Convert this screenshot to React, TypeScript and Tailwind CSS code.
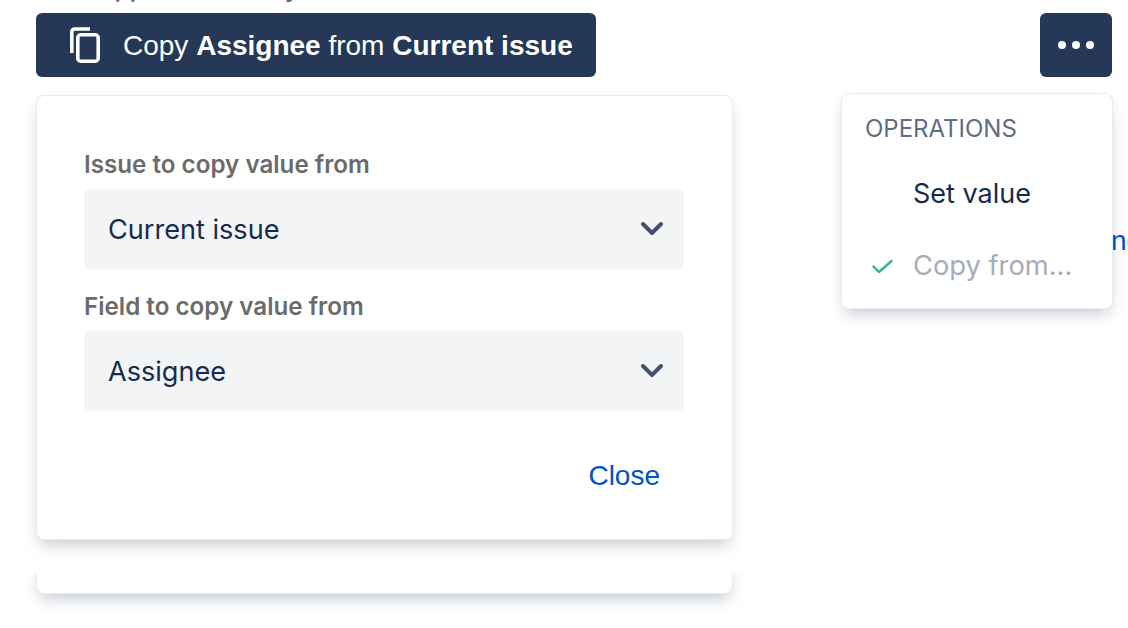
const cardShadow = "shadow-[inset_0_0_0_1px_rgba(9,30,66,0.09),0_8px_16px_-4px_rgba(9,30,66,0.25)]";

function Chevron() {
  return (
    <svg width="24" height="24" viewBox="0 0 24 24" fill="none" className="text-[#42526e]">
      <path d="M3 7 12 16 21 7" stroke="currentColor" strokeWidth="4" strokeLinecap="round" strokeLinejoin="round" />
    </svg>
  );
}

function CopyIcon() {
  return (
    <svg width="30" height="36" viewBox="0 0 30 36" fill="none" stroke="white" strokeWidth="3.6">
      <path d="M1.8 26V5a3 3 0 0 1 3-3H20" />
      <rect x="7.8" y="7.8" width="20.4" height="26.4" rx="3" />
    </svg>
  );
}

function SelectField({ label, value }: { label: string; value: string }) {
  return (
    <div>
      <p className="text-[24.2px] font-semibold leading-[28px] text-[#6b6b6b]">{label}</p>
      <div className="mt-[10px] flex h-[80px] items-center justify-between rounded-[6px] bg-[#f3f4f6] pl-[24px] pr-[20px]">
        <span className="translate-y-[1px] text-[27.1px] text-[#172b4d]">{value}</span>
        <Chevron />
      </div>
    </div>
  );
}

export default function App() {
  return (
    <div className="h-[628px] w-[1128px] overflow-hidden bg-white font-['Inter',sans-serif]">
      <div className="h-[13px] overflow-hidden pl-[84px]">
        <p className="-mt-[25px] text-[24.2px] font-semibold leading-[28px] text-[#6b6b6b]">Supported item by</p>
      </div>
      <div className="flex items-start justify-between pl-[36px] pr-[16px]">
        <div className="flex h-[64px] w-[560px] items-center gap-[23px] rounded-[6px] bg-[#253858] pl-[34px] font-['Liberation_Sans',sans-serif] text-[28px] text-white">
          <CopyIcon />
          <span className="translate-y-[1px]">
            Copy <b>Assignee</b> from <b>Current issue</b>
          </span>
        </div>
        <div className="flex h-[64px] w-[72px] items-center justify-center gap-[6px] rounded-[6px] bg-[#253858]">
          <span className="size-[8px] rounded-full bg-white" />
          <span className="size-[8px] rounded-full bg-white" />
          <span className="size-[8px] rounded-full bg-white" />
        </div>
      </div>
      <div className="mt-[16px] flex items-start">
        <div className="ml-[36px] w-[697px] shrink-0">
          <div className={`mt-[2px] h-[445px] rounded-[8px] bg-white pl-[48px] pr-[49px] pt-[56px] ${cardShadow}`}>
            <div className="flex flex-col gap-[24px]">
              <SelectField label="Issue to copy value from" value="Current issue" />
              <SelectField label="Field to copy value from" value="Assignee" />
            </div>
            <div className="mt-[49px] flex justify-end pr-[24px] font-['Liberation_Sans',sans-serif] text-[28px] leading-[32px] text-[#0052cc]">
              Close
            </div>
          </div>
        </div>
        <div className={`relative z-10 ml-[108px] h-[216px] w-[272px] shrink-0 rounded-[8px] bg-white px-[24px] ${cardShadow}`}>
          <p className="pt-[22px] text-[24px] leading-[28px] text-[#5e6c84]">OPERATIONS</p>
          <p className="mt-[33px] pl-[48px] text-[27px] leading-[36px] text-[#172b4d]">Set value</p>
          <div className="mt-[36px] flex items-center">
            <svg width="48" height="24" viewBox="0 0 48 24" fill="none" stroke="#36b37e" strokeWidth="2.4">
              <path d="M8.5 12.5 14 18 26.5 7" strokeLinecap="round" strokeLinejoin="round" />
            </svg>
            <span className="text-[27.3px] leading-[36px] text-[#a5adba]">Copy from...</span>
          </div>
        </div>
        <span className="mt-[132px] -ml-[2px] whitespace-nowrap font-['Liberation_Sans',sans-serif] text-[28px] leading-[32px] text-[#0052cc]">ne</span>
      </div>
      <div className="mt-[33px] h-[55px] overflow-hidden pl-[36px] pr-[395px]">
        <div className={`-mt-[12px] h-[33px] rounded-[8px] bg-white ${cardShadow}`} />
      </div>
    </div>
  );
}
